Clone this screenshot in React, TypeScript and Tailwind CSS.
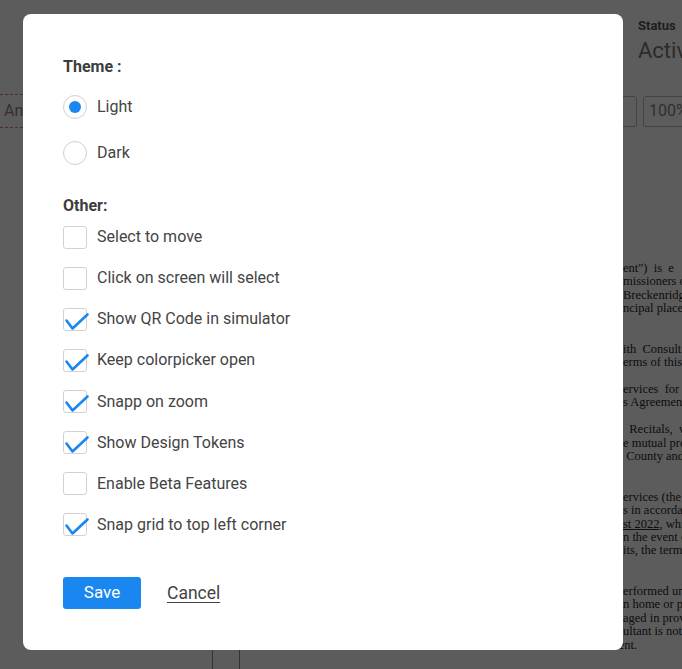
import React from "react";

const docLines: string[] = [
  'ent")  is  e',
  "missioners o",
  "Breckenridge",
  "ncipal place",
  "",
  "",
  "ith  Consult",
  "erms of this A",
  "",
  "ervices  for",
  "s Agreement.",
  "",
  "\u00a0\u00a0Recitals,  w",
  "e mutual prom",
  "\u00a0County and",
  "",
  "",
  'ervices (the "',
  "s in accordan",
  "__st 2022, whic",
  "n the event of",
  "its, the terms",
  "",
  "",
  "erformed und",
  "n home or pla",
  "aged in provi",
  "ultant is not",
  "ment.",
];

function Radio({ checked, label }: { checked: boolean; label: string }) {
  return (
    <div className="flex items-center h-[24px]">
      <span className="w-[24px] h-[24px] rounded-full border border-[#cfcfcf] flex items-center justify-center">
        {checked && <span className="w-[12px] h-[12px] rounded-full bg-[#1a87f0]" />}
      </span>
      <span className="ml-[10px] text-[16px] text-[#444]">{label}</span>
    </div>
  );
}

function Check({ checked, label }: { checked: boolean; label: string }) {
  return (
    <div className="flex items-center h-[23px]">
      <span className="relative w-[24px] h-[23px] rounded-[3px] border border-[#d2d2d2] bg-white">
        {checked && (
          <svg
            className="absolute left-0 top-0 overflow-visible"
            width="24"
            height="23"
            viewBox="0 0 24 23"
          >
            <path
              d="M2.5 11.5 L8.5 19.5 L23.5 5.5"
              fill="none"
              stroke="#1a87f0"
              strokeWidth="2.6"
              strokeLinecap="round"
              strokeLinejoin="round"
            />
          </svg>
        )}
      </span>
      <span className="ml-[10px] text-[16px] text-[#444]">{label}</span>
    </div>
  );
}

export default function App() {
  const options: [string, boolean][] = [
    ["Select to move", false],
    ["Click on screen will select", false],
    ["Show QR Code in simulator", true],
    ["Keep colorpicker open", true],
    ["Snapp on zoom", true],
    ["Show Design Tokens", true],
    ["Enable Beta Features", false],
    ["Snap grid to top left corner", true],
  ];

  return (
    <div className="relative w-[682px] h-[669px] overflow-hidden bg-white font-['Roboto',sans-serif]">
      {/* underlying page */}
      <div className="flex flex-col h-full">
        <div className="h-[94px] pl-[638px] pt-[18px] whitespace-nowrap overflow-hidden">
          <div className="text-[13px] font-bold text-[#555] leading-[16px]">Status</div>
          <div className="text-[22px] text-[#777] leading-[28px] mt-[3px]">Active</div>
        </div>
        <div className="h-[34px] flex items-center whitespace-nowrap overflow-hidden">
          <div className="w-[213px] shrink-0 h-[34px] border-y border-dashed border-[#e08080] flex items-center pl-[4px] text-[16px] text-[#888]">
            Analysis
          </div>
          <div className="ml-auto flex items-center gap-[6px] -mr-[40px]">
            <div className="w-[50px] h-[31px] border border-[#bbb] rounded-[3px]" />
            <div className="w-[79px] h-[31px] border border-[#bbb] rounded-[3px] flex items-center pl-[5px] text-[16px] text-[#888]">
              100%
            </div>
          </div>
        </div>
        <div className="flex-1 flex min-h-0">
          <div className="w-[213px] shrink-0 border-r border-[#8e8e8e]" />
          <div className="w-[27px] shrink-0 border-r border-[#8e8e8e]" />
          <div className="flex-1 min-w-0 overflow-hidden pl-[383px] pt-[134px] font-['Liberation_Serif',serif] text-[12.5px] leading-[13.45px] text-[#2a2a2a] whitespace-pre">
            {docLines.map((l, i) =>
              l === "" ? (
                <div key={i} className="h-[13.45px]" />
              ) : l.startsWith("__") ? (
                <div key={i}>
                  <span className="underline">st 2022</span>, whic
                </div>
              ) : l === "ment." ? (
                <div key={i} className="-ml-[14px]">
                  {l}
                </div>
              ) : (
                <div key={i}>{l}</div>
              )
            )}
          </div>
        </div>
      </div>

      {/* overlay */}
      <div className="absolute inset-0 bg-black/[0.64]" />

      {/* modal */}
      <div className="absolute left-[23px] top-[14px] w-[600px] h-[636px] bg-white rounded-[8px] pl-[40px] pt-[43px]">
        <div className="text-[16px] leading-[20px] font-bold text-[#3d3d3d]">Theme :</div>
        <div className="mt-[18px]">
          <Radio checked label="Light" />
        </div>
        <div className="mt-[22px]">
          <Radio checked={false} label="Dark" />
        </div>
        <div className="mt-[31px] text-[16px] leading-[20px] font-bold text-[#3d3d3d]">Other:</div>
        <div className="mt-[9.5px] flex flex-col gap-[18.15px]">
          {options.map(([l, c]) => (
            <Check key={l} checked={c} label={l} />
          ))}
        </div>
        <div className="mt-[40.5px] flex items-center">
          <button className="w-[78px] h-[32px] bg-[#1a87f0] rounded-[3px] text-white text-[17px] leading-none">
            Save
          </button>
          <button className="ml-[26px] text-[17.5px] text-[#444] underline underline-offset-[3px]">
            Cancel
          </button>
        </div>
      </div>
    </div>
  );
}
